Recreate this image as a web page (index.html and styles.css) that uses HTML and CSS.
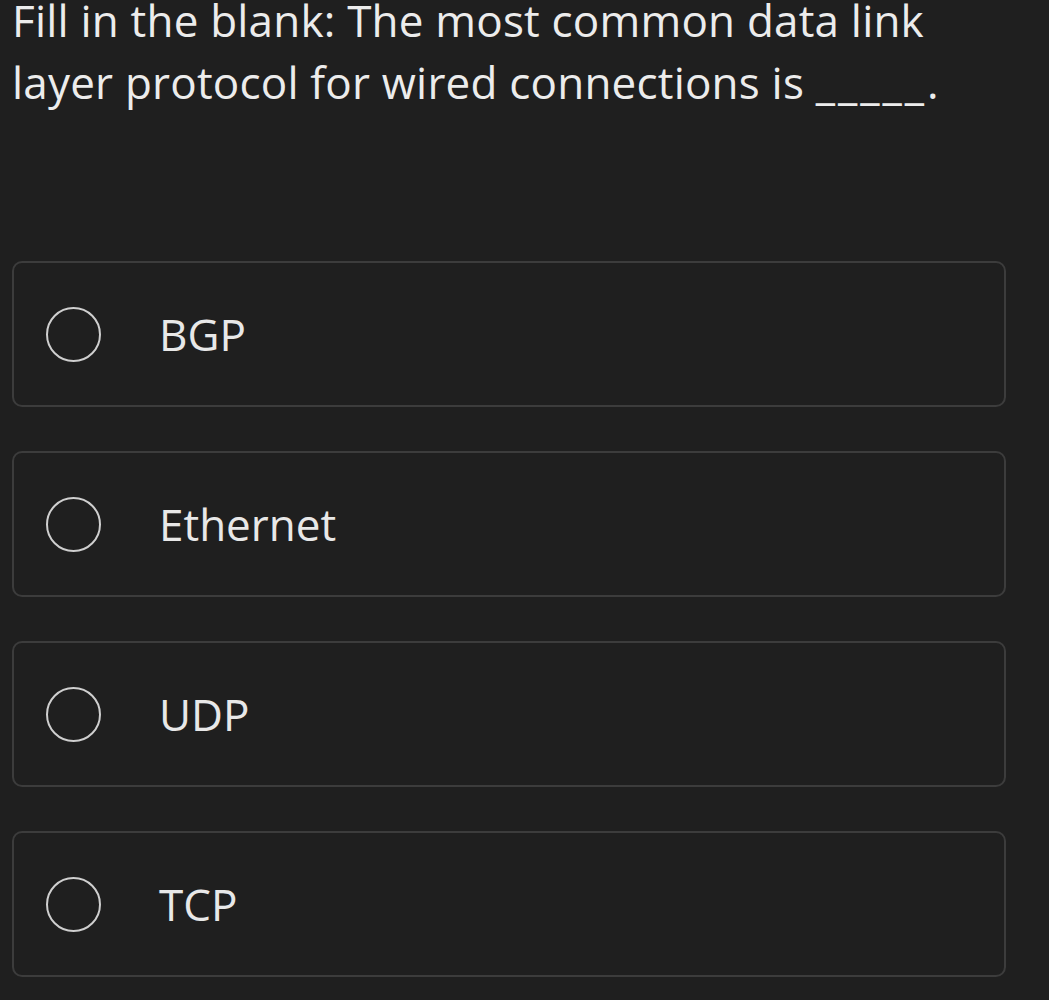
FILE: index.html
```html
<!DOCTYPE html>
<html lang="en">
<head>
  <meta charset="UTF-8" />
  <meta name="viewport" content="width=device-width, initial-scale=1.0"/>
  <title>Quiz Question</title>
  <link rel="stylesheet" href="styles.css">
</head>
<body>

<div class="quiz">
  <h2 class="question">Fill in the blank: The most common data link layer protocol for wired connections is <span class="blank">_____</span>.</h2>

  <div class="options">
    <label class="option">
      <span class="radio"></span>
      <span class="option-text">BGP</span>
    </label>
    <label class="option">
      <span class="radio"></span>
      <span class="option-text">Ethernet</span>
    </label>
    <label class="option">
      <span class="radio"></span>
      <span class="option-text">UDP</span>
    </label>
    <label class="option">
      <span class="radio"></span>
      <span class="option-text">TCP</span>
    </label>
  </div>
</div>

</body>
</html>
```

FILE: styles.css
```css
* { box-sizing: border-box; }

body {
  margin: 0;
  background: #1f1f1f;
  color: #e8e8e8;
  font-family: "Open Sans", Lato, sans-serif;
}

.quiz {
  width: 1006px;
  padding-left: 12px;
}

.question {
  margin: -11px 0 0 0;
  font-size: 44px;
  font-weight: 400;
  line-height: 62px;
  letter-spacing: 0.2px;
  color: #ececec;
}

.blank {
  letter-spacing: 3px;
}

.options {
  display: flex;
  flex-direction: column;
  gap: 44px;
  margin-top: 148px;
}

.option {
  display: flex;
  align-items: center;
  gap: 58px;
  height: 146px;
  padding-left: 32px;
  border: 2px solid #3c3c3c;
  border-radius: 10px;
  cursor: pointer;
}

.radio {
  width: 55px;
  height: 55px;
  border: 2px solid #cfcfcf;
  border-radius: 50%;
  flex-shrink: 0;
}

.option-text {
  font-size: 44px;
  color: #e8e8e8;
}
```
